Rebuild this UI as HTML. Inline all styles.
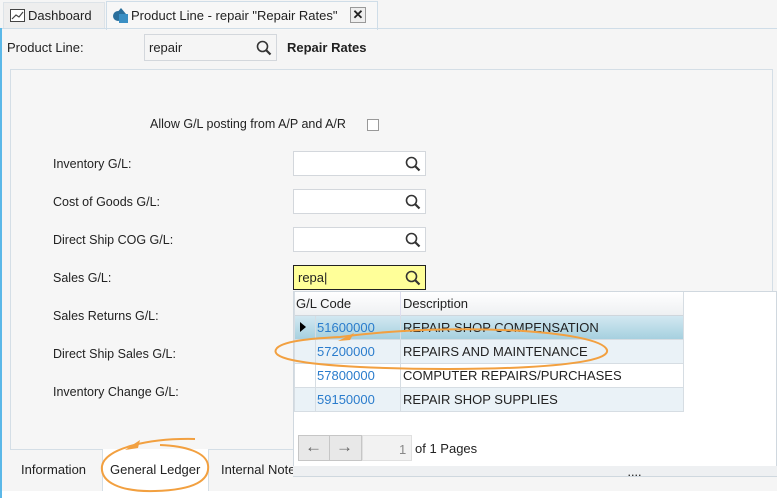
<!DOCTYPE html>
<html><head><style>
body{margin:0;width:777px;height:503px;position:relative;overflow:hidden;background:#fff;font-family:"Liberation Sans",sans-serif;font-size:13px;color:#222}
.a{position:absolute}
.inp{position:absolute;background:#fff;border:1px solid #d3d7dc;box-sizing:border-box;height:25px;width:133px;left:293px}
.lbl{position:absolute;left:53px;font-size:12.5px}
.mag{position:absolute;right:4px;top:4px}
.row{position:absolute;left:294px;width:389px;height:24px;border-bottom:1px solid #d6dde3;box-sizing:border-box}
.row .c{position:absolute;left:21px;top:0;width:86px;height:23px;border-left:1px solid #d6dde3;border-right:1px solid #d6dde3;color:#2a7ccc;padding:4px 0 0 0;box-sizing:border-box;text-indent:1px}
.row .d{position:absolute;left:109px;top:4px}
</style></head><body>
<div class="a" style="left:0;top:0;width:777px;height:491px;background:#f5f5f5"></div>
<!-- tabs -->
<div class="a" style="left:3px;top:2px;width:100px;height:26px;background:#eee;border:1px solid #dde3e8;border-bottom:none"></div>
<svg class="a" style="left:10px;top:9px" width="15" height="13"><rect x="0.5" y="0.5" width="14" height="12" fill="#fff" stroke="#444"/><polyline points="2,10 6,6 9,8 13,3" fill="none" stroke="#444" stroke-width="1.2"/></svg>
<div class="a" style="left:28px;top:8px">Dashboard</div>
<div class="a" style="left:106px;top:1px;width:270px;height:28px;background:#f7f7f7;border:1px solid #cfdde8;border-bottom:none"></div>
<svg class="a" style="left:112px;top:7px" width="17" height="16"><circle cx="6" cy="9" r="5" fill="#2a6f9c"/><rect x="7" y="7" width="9" height="9" fill="#3a8fc4"/><polygon points="9,1 14,7 4,7" fill="#2a6f9c"/></svg>
<div class="a" style="left:131px;top:8px">Product Line - repair "Repair Rates"</div>
<div class="a" style="left:350px;top:7px;width:16px;height:16px;border:1px solid #999;background:#eee;box-sizing:border-box;text-align:center;font-weight:bold;font-size:13px;line-height:14px">✕</div>
<div class="a" style="left:0;top:28px;width:777px;height:1px;background:#cfdde8"></div>
<div class="a" style="left:0;top:28px;width:2px;height:470px;background:#5bb8e8"></div>
<div class="a" style="left:7px;top:40px">Product Line:</div>
<div class="a" style="left:144px;top:34px;width:133px;height:27px;border:1px solid #d3d7dc;background:#f5f5f5;box-sizing:border-box"></div>
<div class="a" style="left:149px;top:40px">repair</div>
<svg class="a" style="left:256px;top:40px" width="16" height="16"><circle cx="6.5" cy="6.5" r="5" fill="none" stroke="#333" stroke-width="1.6"/><line x1="10" y1="10" x2="14.5" y2="14.5" stroke="#333" stroke-width="2.2"/></svg>
<div class="a" style="left:287px;top:40px;font-weight:bold">Repair Rates</div>
<!-- panel -->
<div class="a" style="left:10px;top:69px;width:763px;height:381px;border:1px solid #d4dee6;box-sizing:border-box;background:#f6f6f6"></div>
<div class="a" style="left:150px;top:117px;font-size:12.5px">Allow G/L posting from A/P and A/R</div>
<div class="a" style="left:367px;top:119px;width:12px;height:12px;border:1px solid #999;background:#fff;box-sizing:border-box"></div>
<div class="lbl" style="top:157px">Inventory G/L:</div>
<div class="lbl" style="top:195px">Cost of Goods G/L:</div>
<div class="lbl" style="top:233px">Direct Ship COG G/L:</div>
<div class="lbl" style="top:271px">Sales G/L:</div>
<div class="lbl" style="top:309px">Sales Returns G/L:</div>
<div class="lbl" style="top:347px">Direct Ship Sales G/L:</div>
<div class="lbl" style="top:385px">Inventory Change G/L:</div>
<div class="inp" style="top:151px"><svg class="mag" width="16" height="16"><circle cx="6.5" cy="6.5" r="5" fill="none" stroke="#333" stroke-width="1.6"/><line x1="10" y1="10" x2="14.5" y2="14.5" stroke="#333" stroke-width="2.2"/></svg></div>
<div class="inp" style="top:189px"><svg class="mag" width="16" height="16"><circle cx="6.5" cy="6.5" r="5" fill="none" stroke="#333" stroke-width="1.6"/><line x1="10" y1="10" x2="14.5" y2="14.5" stroke="#333" stroke-width="2.2"/></svg></div>
<div class="inp" style="top:227px"><svg class="mag" width="16" height="16"><circle cx="6.5" cy="6.5" r="5" fill="none" stroke="#333" stroke-width="1.6"/><line x1="10" y1="10" x2="14.5" y2="14.5" stroke="#333" stroke-width="2.2"/></svg></div>
<div class="inp" style="top:265px;background:#ffff99;border:1px solid #222"><span class="a" style="left:4px;top:4px">repa|</span><svg class="mag" width="16" height="16"><circle cx="6.5" cy="6.5" r="5" fill="none" stroke="#333" stroke-width="1.6"/><line x1="10" y1="10" x2="14.5" y2="14.5" stroke="#333" stroke-width="2.2"/></svg></div>
<!-- bottom tabs -->
<div class="a" style="left:102px;top:449px;width:105px;height:42px;background:#fff;border-left:1px solid #d4dee6;border-right:1px solid #d4dee6"></div>
<div class="a" style="left:21px;top:462px">Information</div>
<div class="a" style="left:110px;top:462px">General Ledger</div>
<div class="a" style="left:221px;top:462px">Internal Note</div>
<!-- dropdown -->
<div class="a" style="left:293px;top:291px;width:484px;height:176px;background:#fff;border:1px solid #d0d8df;box-sizing:border-box"></div>
<div class="a" style="left:293px;top:466px;width:484px;height:10px;background:#eef0f2;border-bottom:1px solid #cfd8df"></div>
<div class="a" style="left:628px;top:468px;font-size:9px;font-weight:bold;letter-spacing:1px">....</div>
<div class="a" style="left:294px;top:292px;width:389px;height:24px;background:linear-gradient(#fff,#eef0f2);border-bottom:1px solid #cfd6dc;box-sizing:border-box"></div>
<div class="a" style="left:400px;top:292px;width:1px;height:24px;background:#dde"></div>
<div class="a" style="left:296px;top:296px">G/L Code</div>
<div class="a" style="left:403px;top:296px">Description</div>
<div class="row" style="top:316px;background:linear-gradient(#d2e8f1,#a6d0df)"><span class="a" style="left:6px;top:6px;width:0;height:0;border-left:6px solid #000;border-top:5px solid transparent;border-bottom:5px solid transparent"></span><div class="c">51600000</div><div class="d">REPAIR SHOP COMPENSATION</div></div>
<div class="row" style="top:340px;background:#eaf2f7"><div class="c">57200000</div><div class="d">REPAIRS AND MAINTENANCE</div></div>
<div class="row" style="top:364px;background:#fff"><div class="c">57800000</div><div class="d">COMPUTER REPAIRS/PURCHASES</div></div>
<div class="row" style="top:388px;background:#eaf2f7"><div class="c">59150000</div><div class="d">REPAIR SHOP SUPPLIES</div></div>
<div class="a" style="left:683px;top:292px;width:1px;height:120px;background:#d6dde3"></div>
<div class="a" style="left:294px;top:292px;width:1px;height:120px;background:#d6dde3"></div>
<div class="a" style="left:298px;top:435px;width:64px;height:26px;background:#e8e8e8;border:1px solid #c6c6c6;box-sizing:border-box"></div>
<div class="a" style="left:329px;top:436px;width:1px;height:24px;background:#c6c6c6"></div>
<div class="a" style="left:305px;top:437px;font-size:17px;color:#666;font-weight:bold">←</div>
<div class="a" style="left:336px;top:437px;font-size:17px;color:#666;font-weight:bold">→</div>
<div class="a" style="left:362px;top:435px;width:50px;height:26px;background:#f2f2f2;border:1px solid #e0e0e0;box-sizing:border-box"></div>
<div class="a" style="left:399px;top:442px;color:#888">1</div>
<div class="a" style="left:415px;top:441px">of 1 Pages</div>
<!-- orange annotations -->
<svg class="a" style="left:0;top:0" width="777" height="503">
<g fill="none" stroke="#f2a040" stroke-width="2">
<path d="M340 337 C450 322 600 330 607 350 C612 368 470 372 360 367 C300 364 268 358 277 348 C285 340 320 338 340 337"/>
<path d="M195 439 C150 438 105 448 102 466 C100 482 120 492 155 491 C195 490 210 480 208 465 C206 452 185 446 160 445"/>
</g>
<path d="M338 341 L354 333 L350 340 Z" fill="#f2a040"/>
<path d="M125 450 L140 440 L138 448 Z" fill="#f2a040"/>
</svg>
</body></html>
